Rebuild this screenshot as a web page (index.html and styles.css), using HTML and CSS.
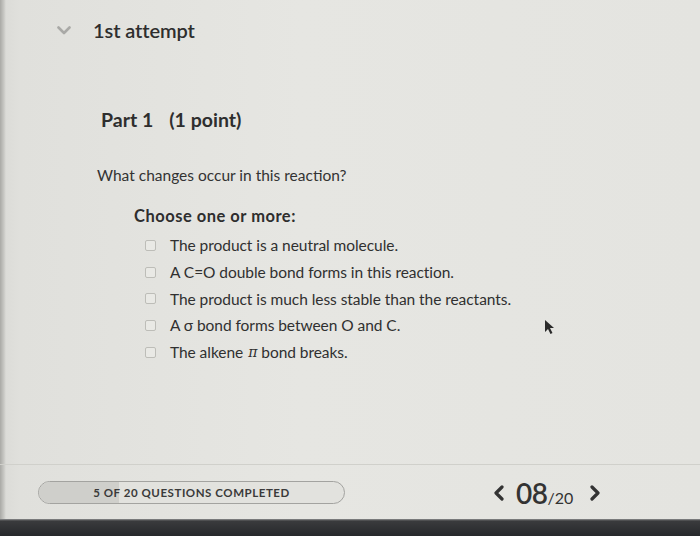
FILE: index.html
```html
<!DOCTYPE html>
<html>
<head>
<meta charset="utf-8">
<link rel="stylesheet" href="styles.css">
</head>
<body>
<div class="screen">
  <div class="main">
    <div class="attempt">
      <svg class="chev" width="14" height="9" viewBox="0 0 14 9"><path d="M1.5 1.5 L7 7 L12.5 1.5" fill="none" stroke="#a9a9a6" stroke-width="2.6" stroke-linecap="round" stroke-linejoin="round"/></svg>
      <span class="attempt-title">1st attempt</span>
    </div>
    <div class="part">
      <h2 class="part-title">Part 1<span class="points">(1 point)</span></h2>
      <p class="question">What changes occur in this reaction?</p>
      <div class="choices">
        <div class="choose">Choose one or more:</div>
        <ul class="options">
          <li class="option"><span class="box"></span>The product is a neutral molecule.</li>
          <li class="option"><span class="box"></span>A C=O double bond forms in this reaction.</li>
          <li class="option"><span class="box"></span>The product is much less stable than the reactants.</li>
          <li class="option"><span class="box"></span>A σ bond forms between O and C.</li>
          <li class="option"><span class="box"></span>The alkene<i class="pi">π</i>bond breaks.</li>
        </ul>
      </div>
    </div>
    <svg class="cursor" width="12" height="16" viewBox="0 0 12 16"><path d="M1 1 L1 13 L4 10 L6.5 15 L8.5 14 L6 9 L10 9 Z" fill="#2a2a2a"/></svg>
  </div>
  <div class="footer">
    <div class="progress">
      <div class="progress-fill"></div>
      <span class="progress-text">5 OF 20 QUESTIONS COMPLETED</span>
    </div>
    <div class="nav">
      <svg class="arrow" width="12" height="16" viewBox="0 0 12 16"><path d="M9 2 L3 8 L9 14" fill="none" stroke="#333" stroke-width="3.2" stroke-linecap="round" stroke-linejoin="round"/></svg>
      <span class="num">08</span><span class="total">/20</span>
      <svg class="arrow next" width="12" height="16" viewBox="0 0 12 16"><path d="M3 2 L9 8 L3 14" fill="none" stroke="#333" stroke-width="3.2" stroke-linecap="round" stroke-linejoin="round"/></svg>
    </div>
  </div>
  <div class="bezel"></div>
</div>
</body>
</html>
```

FILE: styles.css
```css
html, body {
  margin: 0;
  padding: 0;
}
body {
  width: 700px;
  height: 536px;
  overflow: hidden;
  font-family: Lato, "Open Sans", sans-serif;
  color: #2f2f2f;
  background: #e4e4e0;
}
.screen {
  position: relative;
  height: 536px;
  display: flex;
  flex-direction: column;
  background: linear-gradient(90deg, #a9a9a5 0px, #c9c9c5 4px, #dcdcd8 6px, #e0e0dc 20px, #e6e6e2 300px, #e4e4e0 700px);
}
.main {
  position: relative;
  height: 465px;
  box-sizing: border-box;
  border-bottom: 1px solid #d0d0cb;
}
.attempt {
  display: flex;
  align-items: center;
  padding: 17px 0 0 57px;
  height: 26px;
}
.chev {
  margin-top: 1px;
}
.attempt-title {
  margin-left: 22px;
  font-size: 20px;
  font-weight: 600;
  color: #2e2e2e;
  letter-spacing: -0.1px;
}
.part {
  padding-left: 101px;
  margin-top: 65px;
}
.part-title {
  margin: 0;
  font-size: 19.5px;
  font-weight: 700;
  color: #2e2e2e;
  line-height: 24px;
}
.points {
  margin-left: 16px;
}
.question {
  margin: 33px 0 0 -4px;
  font-size: 15.5px;
  line-height: 20px;
  color: #333;
}
.choices {
  margin-left: 33px;
  margin-top: 21px;
}
.choose {
  font-size: 16.5px;
  font-weight: 700;
  line-height: 20px;
  color: #2e2e2e;
  letter-spacing: 0.5px;
}
.options {
  list-style: none;
  margin: 6px 0 0 0;
  padding: 0;
}
.option {
  display: flex;
  align-items: center;
  height: 26.7px;
  font-size: 15.5px;
  color: #303030;
  letter-spacing: -0.05px;
}
.box {
  width: 9px;
  height: 9px;
  border: 1px solid #bdbdb8;
  border-radius: 2px;
  background: #e9e9e5;
  margin: 0 14px 0 11px;
  flex: none;
}
.pi {
  font-family: "DejaVu Serif", serif;
  font-size: 14px;
  margin: 0 4px 0 5px;
}
.cursor {
  position: absolute;
  left: 544px;
  top: 319px;
}
.footer {
  height: 54px;
  display: flex;
  align-items: center;
  padding: 0 0 0 38px;
  box-sizing: border-box;
}
.progress {
  position: relative;
  width: 307px;
  height: 23px;
  box-sizing: border-box;
  border: 1px solid #a3a3a0;
  border-radius: 12px;
  overflow: hidden;
  display: flex;
  align-items: center;
  justify-content: center;
  background: #e2e2de;
}
.progress-fill {
  position: absolute;
  left: 0;
  top: 0;
  bottom: 0;
  width: 80px;
  background: #cfcfcb;
}
.progress-text {
  position: relative;
  font-size: 11.5px;
  font-weight: 700;
  color: #3a3a3a;
  letter-spacing: 0.55px;
}
.nav {
  display: flex;
  align-items: center;
  margin-left: 148px;
  margin-top: 2px;
}
.num {
  margin-left: 11px;
  font-size: 28px;
  font-weight: 600;
  color: #333;
  letter-spacing: -0.5px;
}
.total {
  font-size: 16px;
  color: #333;
  margin-top: 9px;
}
.arrow.next {
  margin-left: 16px;
}
.bezel {
  flex: 1;
  background: linear-gradient(180deg, #8e8f90 0px, #3a3b3d 2px, #26282b 100%);
}
```
